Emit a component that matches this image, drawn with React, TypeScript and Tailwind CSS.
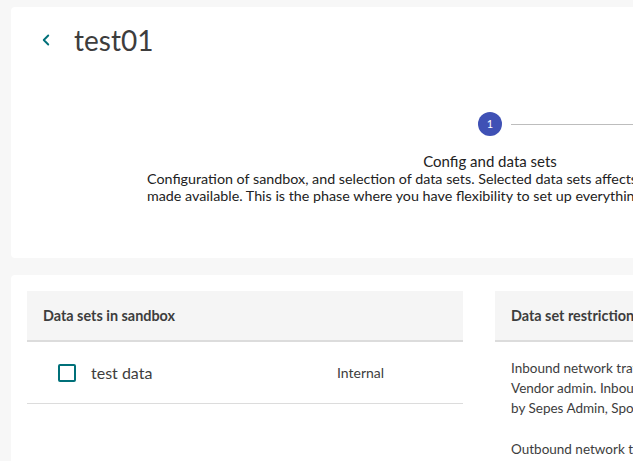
import { ChevronLeft } from "lucide-react";

const font = { fontFamily: "Lato, 'Noto Sans', sans-serif" };

function Stepper() {
  return (
    <div className="flex flex-col pl-[136px] pt-[55px]">
      <div className="flex w-[686px] flex-col items-center">
        <div className="flex w-full items-center">
          <div className="w-[331px]" />
          <div className="flex h-6 w-6 items-center justify-center rounded-full bg-[#3f51b5] text-[11px] text-white">
            1
          </div>
          <div className="ml-[9px] h-px flex-1 bg-[#bdbdbd]" />
        </div>
        <div className="mt-[17px] text-[15px] leading-[17px] text-[#222]">Config and data sets</div>
      </div>
      <div className="w-[900px] text-[14.3px] leading-[17px] text-[#222]">
        <div className="whitespace-nowrap">
          Configuration of sandbox, and selection of data sets. Selected data sets affects which restrictions are applied to the sandbox.
        </div>
        <div className="whitespace-nowrap">
          made available. This is the phase where you have flexibility to set up everything you need.
        </div>
      </div>
    </div>
  );
}

export default function App() {
  return (
    <div className="h-screen w-screen overflow-hidden bg-[#f7f7f7] text-[#3d3d3d]" style={font}>
      <div className="w-[1100px] pl-[11px] pt-[7px]">
        <div className="h-[251px] rounded bg-white">
          <div className="flex items-center pl-[26px] pt-[16px]">
            <ChevronLeft className="h-[18px] w-[18px] text-[#007079]" strokeWidth={2.5} />
            <h1 className="ml-[19px] text-[28px] leading-[34px] text-[#3d3d3d]">test01</h1>
          </div>
          <Stepper />
        </div>

        <div className="mt-[17px] h-[300px] rounded bg-white pl-4 pt-4">
          <div className="flex gap-8">
            <div className="w-[436px]">
              <div className="flex h-[51px] items-center border-b-2 border-[#dcdcdc] bg-[#f5f5f5] px-4 text-[14.4px] font-bold text-[#3d3d3d]">
                Data sets in sandbox
              </div>
              <div className="flex h-[62px] items-center border-b border-[#dcdcdc] pl-[31px]">
                <span className="h-[18px] w-[18px] rounded-[2px] border-2 border-[#007079]" />
                <span className="ml-[15px] w-[246px] text-[16px] text-[#3d3d3d]">test data</span>
                <span className="text-[14px] text-[#3d3d3d]">Internal</span>
              </div>
            </div>
            <div className="w-[436px]">
              <div className="flex h-[51px] items-center border-b-2 border-[#dcdcdc] bg-[#f5f5f5] px-4 text-[14.4px] font-bold text-[#3d3d3d]">
                Data set restrictions
              </div>
              <div className="px-4 pt-[16px] text-[13.5px] leading-[20px] text-[#3d3d3d]">
                <div className="whitespace-nowrap">Inbound network traffic is restricted, only allowed from IP ranges added by Sponsor or</div>
                <div className="whitespace-nowrap">Vendor admin. Inbound traffic from the internet is open, and can be restricted</div>
                <div className="whitespace-nowrap">by Sepes Admin, Sponsor or Vendor admin.</div>
                <div className="mt-[21px] whitespace-nowrap">Outbound network traffic is open.</div>
              </div>
            </div>
          </div>
        </div>
      </div>
    </div>
  );
}
